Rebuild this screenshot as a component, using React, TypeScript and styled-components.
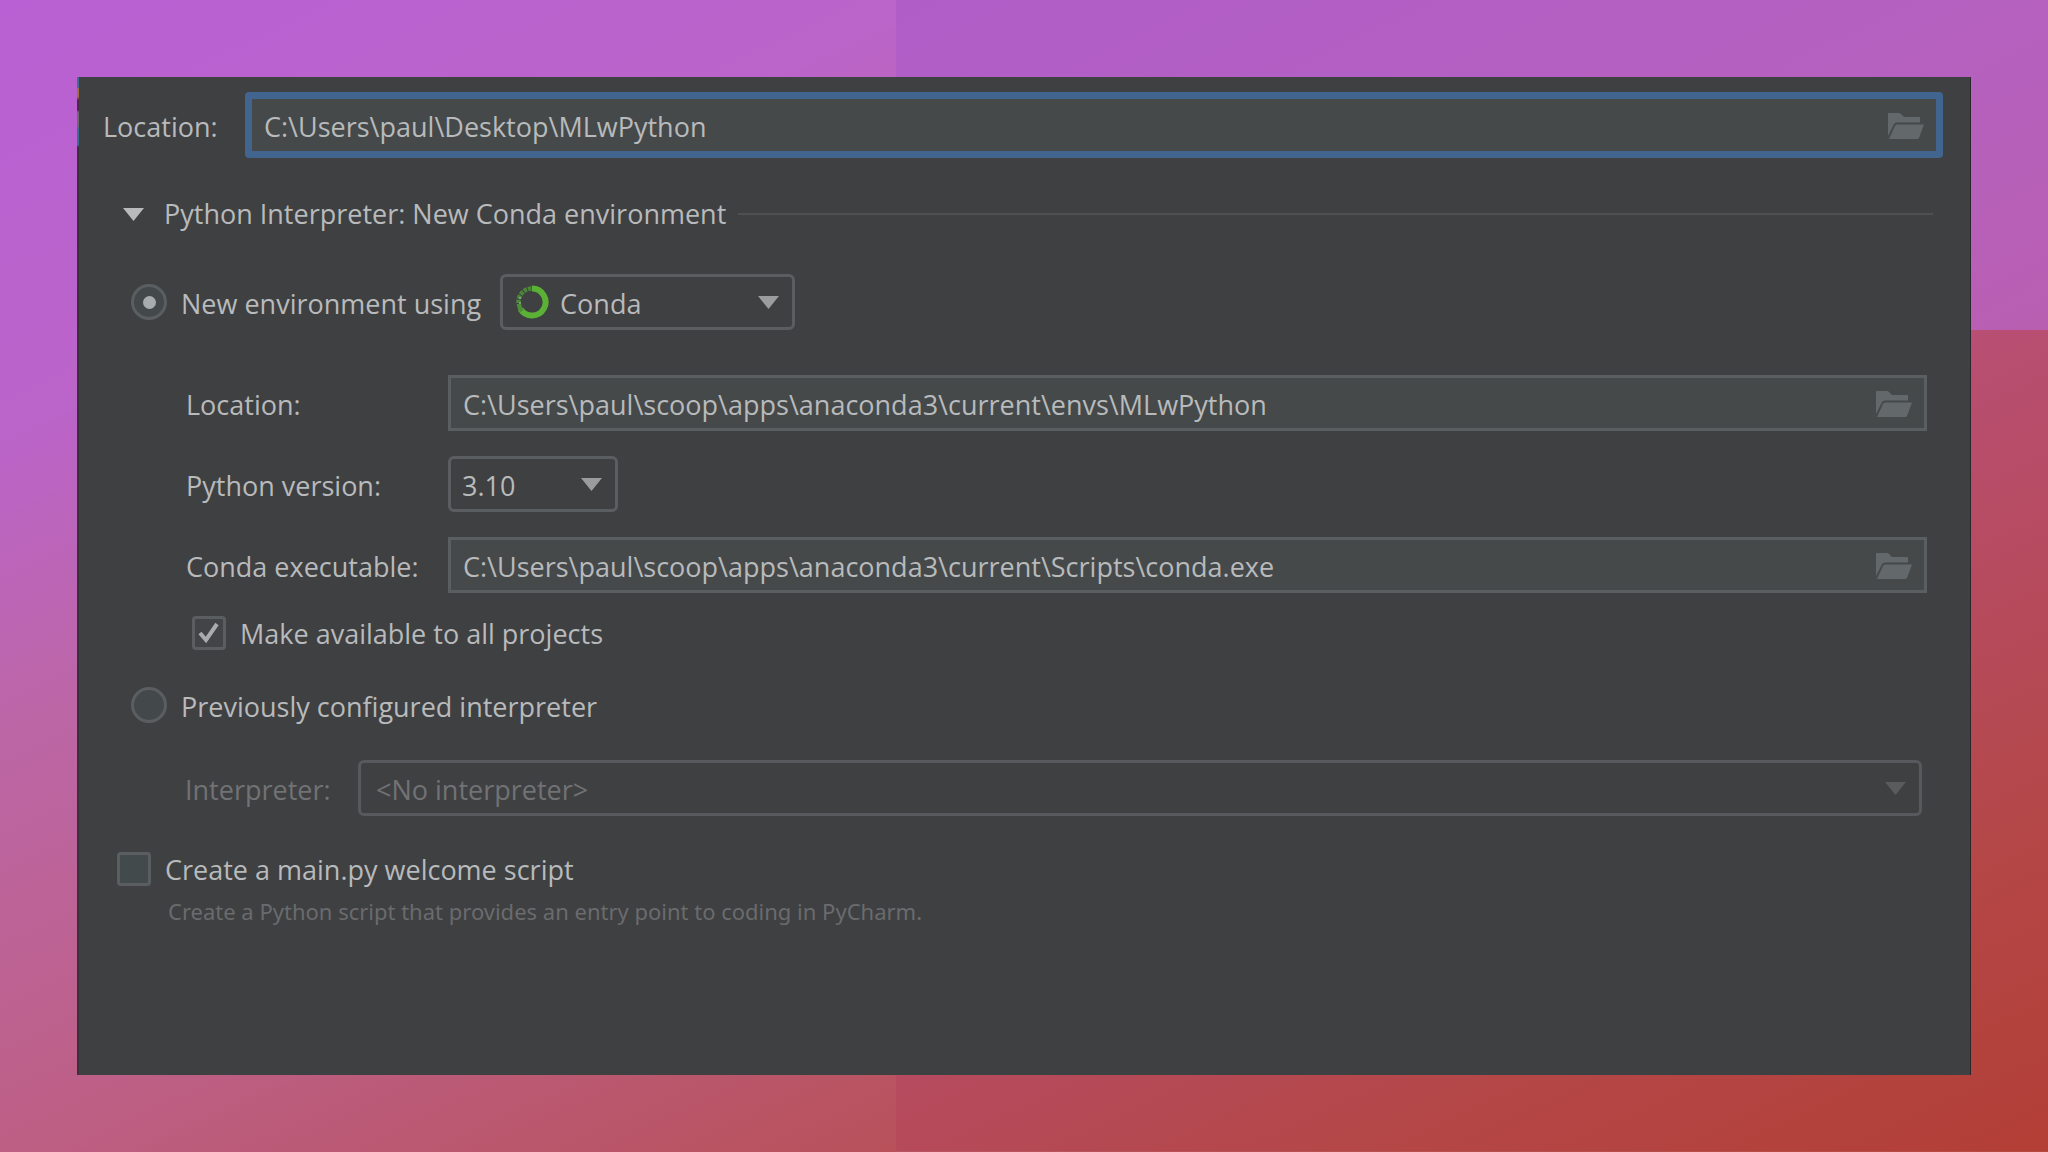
import React, { useState } from "react";
import styled, { createGlobalStyle, css } from "styled-components";

const color = {
  panel: "#3f4042",
  field: "#45494a",
  border: "#5b5e61",
  focus: "#41658f",
  text: "#b8babb",
  disabled: "#717274",
  hint: "#6a6b6d",
  icon: "#63686a",
  arrow: "#9b9c9e",
};

const GlobalStyle = createGlobalStyle`
  *, *::before, *::after { box-sizing: border-box; }
  body { margin: 0; }
  body, button, input, select {
    font-family: "Open Sans", "Noto Sans", sans-serif;
    font-size: 27px;
    line-height: 36px;
  }
`;

const Page = styled.main`
  display: flex;
  min-height: 100vh;
  padding: 77px;
  background:
    linear-gradient(155deg, #b960d4 0%, #bb64c9 28%, #bc66a6 47%, #bd5f85 73%, #b8515a 100%)
      left top / 43.75% 100% no-repeat,
    linear-gradient(155deg, #b05dc8 0%, #b561c0 60%, #b95fb2 100%)
      right top / 56.25% 28.65% no-repeat,
    linear-gradient(155deg, #bb5086 0%, #b84f74 37%, #b64b60 55%, #b44748 75%, #b33f36 100%)
      right bottom / 56.25% 71.35% no-repeat;
`;

const Panel = styled.form`
  flex: 1;
  min-width: 0;
  padding: 15px 28px 36px 24px;
  color: ${color.text};
  background:
    linear-gradient(
        #3d6f8c 0 10px,
        #a06f3c 12px 20px,
        #4a2a45 23px 33px,
        #6d686b 35px 48px,
        #3a6f8c 53px 68px,
        #39323a 70px
      )
      left top / 2px 100% no-repeat,
    linear-gradient(#2b262b, #2b262b) right top / 1px 100% no-repeat,
    ${color.panel};
`;

const ProjectRow = styled.div`
  display: grid;
  grid-template-columns: 144px 1fr;
  align-items: center;
`;

const FieldLabel = styled.label<{ $disabled?: boolean }>`
  padding: 3px 0 0 2px;
  color: ${(p) => (p.$disabled ? color.disabled : color.text)};
`;

const FieldFrame = styled.div<{ $focused?: boolean }>`
  display: flex;
  align-items: center;
  height: 56px;
  padding-right: 12px;
  border: 3px solid ${color.border};
  background: ${color.field};
  ${(p) =>
    p.$focused &&
    css`
      height: 66px;
      border: 7px solid ${color.focus};
      border-radius: 4px;
    `}
`;

const TextInput = styled.input`
  flex: 1;
  min-width: 0;
  padding: 3px 12px 0;
  border: 0;
  outline: 0;
  color: inherit;
  background: transparent;
`;

const BrowseButton = styled.button`
  display: flex;
  padding: 2px 0 0;
  border: 0;
  color: ${color.icon};
  background: transparent;
`;

const SectionToggle = styled.button`
  display: flex;
  align-items: center;
  gap: 20px;
  padding: 0;
  border: 0;
  color: inherit;
  background: transparent;
`;

const SectionHeader = styled.div`
  display: flex;
  align-items: center;
  gap: 12px;
  margin: 38px 10px 0 22px;
`;

const Rule = styled.hr`
  flex: 1;
  height: 2px;
  margin: 0;
  border: 0;
  background: #4f5052;
`;

const Section = styled.fieldset`
  min-width: 0;
  margin: 42px 0 0;
  padding: 0 16px 0 30px;
  border: 0;
`;

const EnvironmentRow = styled.div`
  display: flex;
  align-items: center;
  gap: 19px;
`;

const Option = styled.label`
  display: flex;
  align-items: center;
  gap: 14px;
`;

const OptionText = styled.span`
  padding-top: 3px;
  line-height: 32px;
`;

const Radio = styled.input.attrs({ type: "radio" })`
  appearance: none;
  display: grid;
  place-items: center;
  width: 36px;
  height: 36px;
  margin: 0;
  border: 3px solid ${color.border};
  border-radius: 50%;
  background: #43494b;

  &:checked::before {
    content: "";
    width: 13px;
    height: 13px;
    border-radius: 50%;
    background: #a9acae;
  }
`;

const CheckBoxFrame = styled.span`
  position: relative;
  display: flex;
`;

const CheckBoxInput = styled.input.attrs({ type: "checkbox" })`
  appearance: none;
  width: 34px;
  height: 34px;
  margin: 0;
  border: 3px solid ${color.border};
  border-radius: 4px;
  background: #434a4c;

  &:checked {
    background: #424447;
  }

  & + svg {
    position: absolute;
    inset: 0;
    visibility: hidden;
    pointer-events: none;
  }

  &:checked + svg {
    visibility: visible;
  }
`;

const CondaSettings = styled.div`
  display: grid;
  grid-template-columns: 264px 1fr;
  align-items: center;
  row-gap: 25px;
  margin: 45px 0 22px;
  padding-left: 53px;
`;

const SharedOption = styled.div`
  margin-bottom: 37px;
  padding-left: 61px;
`;

const InterpreterRow = styled.div`
  display: grid;
  grid-template-columns: 175px 1fr;
  align-items: center;
  margin: 37px 5px 35px 0;
  padding-left: 52px;
`;

const SelectFrame = styled.div<{ $width?: string }>`
  position: relative;
  width: ${(p) => p.$width ?? "100%"};
`;

const Select = styled.select<{ $withIcon?: boolean }>`
  appearance: none;
  display: block;
  width: 100%;
  height: 56px;
  padding: 3px 48px 0 ${(p) => (p.$withIcon ? "57px" : "11px")};
  border: 3px solid ${color.border};
  border-radius: 6px;
  outline: 0;
  color: ${color.text};
  background: transparent;

  &:disabled {
    padding-left: 15px;
    border-color: #58595c;
    color: ${color.disabled};
    opacity: 1;
  }
`;

const SelectArrow = styled.span<{ $disabled?: boolean }>`
  position: absolute;
  top: 0;
  right: 16px;
  display: flex;
  align-items: center;
  height: 100%;
  color: ${(p) => (p.$disabled ? "#5a5b5d" : color.arrow)};
  pointer-events: none;
`;

const SelectIcon = styled.span`
  position: absolute;
  top: 0;
  left: 15px;
  display: flex;
  align-items: center;
  height: 100%;
  pointer-events: none;
`;

const WelcomeOption = styled.div`
  padding-left: 16px;
`;

const Hint = styled.p`
  margin: 10px 0 0;
  padding-left: 67px;
  color: ${color.hint};
  font-family: "Noto Sans", "Open Sans", sans-serif;
  font-size: 22px;
  line-height: 30px;
`;

function ArrowDown() {
  return (
    <svg width="21" height="13" viewBox="0 0 21 13" aria-hidden="true">
      <path d="M0 0H21L10.5 13Z" fill="currentColor" />
    </svg>
  );
}

function FolderIcon() {
  return (
    <svg width="36" height="26" viewBox="0 0 36 26" aria-hidden="true">
      <path
        d="M0 1Q0 0 1 0H11Q12 0 13 1L16 4H31Q32 4 32 5V9.500H9Q7 9.500 6 11L0 23ZM9 11.500H36L31 25Q30.500 26 29 26H1L7 13Q7.500 11.500 9 11.500Z"
        fill="currentColor"
      />
    </svg>
  );
}

function CondaIcon() {
  return (
    <svg width="34" height="34" viewBox="0 0 34 34" fill="none" aria-hidden="true">
      <path d="M17 3.500A13.500 13.500 0 1 1 5.500 24" stroke="#5bb135" strokeWidth="6" />
      <path d="M7 26A13.500 13.500 0 0 1 3.800 19" stroke="#4d8f38" strokeWidth="4.500" />
      <path
        d="M3.500 18A13.500 13.500 0 0 1 17 3.500"
        stroke="#4c8639"
        strokeWidth="4.500"
        strokeDasharray="3.500 1"
      />
      <circle cx="5" cy="13" r="1" fill="#8fb583" />
      <circle cx="5" cy="18" r="1" fill="#8fb583" />
    </svg>
  );
}

function PathField(props: { id: string; value: string; focused?: boolean }) {
  const [value, setValue] = useState(props.value);
  return (
    <FieldFrame $focused={props.focused}>
      <TextInput
        id={props.id}
        type="text"
        spellCheck={false}
        value={value}
        onChange={(e) => setValue(e.target.value)}
      />
      <BrowseButton type="button" aria-label="Browse">
        <FolderIcon />
      </BrowseButton>
    </FieldFrame>
  );
}

function RadioOption(props: { label: string; defaultChecked?: boolean }) {
  return (
    <Option>
      <Radio name="environment" defaultChecked={props.defaultChecked} />
      <OptionText>{props.label}</OptionText>
    </Option>
  );
}

function CheckBox(props: { label: string; defaultChecked?: boolean }) {
  return (
    <Option>
      <CheckBoxFrame>
        <CheckBoxInput defaultChecked={props.defaultChecked} />
        <svg width="34" height="34" viewBox="0 0 34 34" fill="none" aria-hidden="true">
          <path d="M8 17L14 24L25 8" stroke="#a9abad" strokeWidth="4" />
        </svg>
      </CheckBoxFrame>
      <OptionText>{props.label}</OptionText>
    </Option>
  );
}

export default function App() {
  const [open, setOpen] = useState(true);
  return (
    <>
      <GlobalStyle />
      <Page>
        <Panel>
          <ProjectRow>
            <FieldLabel htmlFor="project-location">Location:</FieldLabel>
            <PathField
              id="project-location"
              value={"C:\\Users\\paul\\Desktop\\MLwPython"}
              focused
            />
          </ProjectRow>

          <SectionHeader>
            <SectionToggle type="button" aria-expanded={open} onClick={() => setOpen(!open)}>
              <ArrowDown />
              Python Interpreter: New Conda environment
            </SectionToggle>
            <Rule />
          </SectionHeader>

          {open && (
            <Section aria-label="Python Interpreter">
              <EnvironmentRow>
                <RadioOption label="New environment using" defaultChecked />
                <SelectFrame $width="295px">
                  <Select $withIcon aria-label="Environment type">
                    <option>Conda</option>
                  </Select>
                  <SelectIcon>
                    <CondaIcon />
                  </SelectIcon>
                  <SelectArrow>
                    <ArrowDown />
                  </SelectArrow>
                </SelectFrame>
              </EnvironmentRow>

              <CondaSettings>
                <FieldLabel htmlFor="env-location">Location:</FieldLabel>
                <PathField
                  id="env-location"
                  value={"C:\\Users\\paul\\scoop\\apps\\anaconda3\\current\\envs\\MLwPython"}
                />
                <FieldLabel htmlFor="python-version">Python version:</FieldLabel>
                <SelectFrame $width="170px">
                  <Select id="python-version">
                    <option>3.10</option>
                  </Select>
                  <SelectArrow>
                    <ArrowDown />
                  </SelectArrow>
                </SelectFrame>
                <FieldLabel htmlFor="conda-executable">Conda executable:</FieldLabel>
                <PathField
                  id="conda-executable"
                  value={"C:\\Users\\paul\\scoop\\apps\\anaconda3\\current\\Scripts\\conda.exe"}
                />
              </CondaSettings>

              <SharedOption>
                <CheckBox label="Make available to all projects" defaultChecked />
              </SharedOption>

              <RadioOption label="Previously configured interpreter" />

              <InterpreterRow>
                <FieldLabel htmlFor="interpreter" $disabled>
                  Interpreter:
                </FieldLabel>
                <SelectFrame>
                  <Select id="interpreter" disabled>
                    <option>{"<No interpreter>"}</option>
                  </Select>
                  <SelectArrow $disabled>
                    <ArrowDown />
                  </SelectArrow>
                </SelectFrame>
              </InterpreterRow>
            </Section>
          )}

          <WelcomeOption>
            <CheckBox label="Create a main.py welcome script" />
          </WelcomeOption>
          <Hint>Create a Python script that provides an entry point to coding in PyCharm.</Hint>
        </Panel>
      </Page>
    </>
  );
}
